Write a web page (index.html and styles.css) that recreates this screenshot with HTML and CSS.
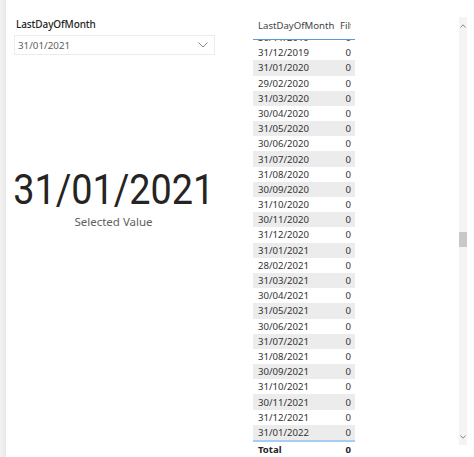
FILE: index.html
```html
<!DOCTYPE html>
<html>
<head>
<meta charset="utf-8">
<link rel="stylesheet" href="styles.css">
</head>
<body>
<div class="edge"></div>
<div class="left">
  <div class="slicer">
    <div class="slicer-label">LastDayOfMonth</div>
    <div class="dropdown">
      <span class="dropdown-value">31/01/2021</span>
      <svg class="chevron" width="10" height="6" viewBox="0 0 10 6"><path d="M0.5 0.5 L5 5 L9.5 0.5" fill="none" stroke="#8a8886" stroke-width="1"/></svg>
    </div>
  </div>
  <div class="card">
    <div class="card-value">31/01/2021</div>
    <div class="card-label">Selected Value</div>
  </div>
</div>
<div class="table-panel">
  <div class="table">
    <div class="thead">
      <div class="c1">LastDayOfMonth</div>
      <div class="c2">FilterFlag</div>
    </div>
    <div class="tbody">
      <div class="row clip"><div class="c1">30/11/2019</div><div class="c2">0</div></div>
      <div class="row"><div class="c1">31/12/2019</div><div class="c2">0</div></div>
      <div class="row"><div class="c1">31/01/2020</div><div class="c2">0</div></div>
      <div class="row"><div class="c1">29/02/2020</div><div class="c2">0</div></div>
      <div class="row"><div class="c1">31/03/2020</div><div class="c2">0</div></div>
      <div class="row"><div class="c1">30/04/2020</div><div class="c2">0</div></div>
      <div class="row"><div class="c1">31/05/2020</div><div class="c2">0</div></div>
      <div class="row"><div class="c1">30/06/2020</div><div class="c2">0</div></div>
      <div class="row"><div class="c1">31/07/2020</div><div class="c2">0</div></div>
      <div class="row"><div class="c1">31/08/2020</div><div class="c2">0</div></div>
      <div class="row"><div class="c1">30/09/2020</div><div class="c2">0</div></div>
      <div class="row"><div class="c1">31/10/2020</div><div class="c2">0</div></div>
      <div class="row"><div class="c1">30/11/2020</div><div class="c2">0</div></div>
      <div class="row"><div class="c1">31/12/2020</div><div class="c2">0</div></div>
      <div class="row"><div class="c1">31/01/2021</div><div class="c2">0</div></div>
      <div class="row"><div class="c1">28/02/2021</div><div class="c2">0</div></div>
      <div class="row"><div class="c1">31/03/2021</div><div class="c2">0</div></div>
      <div class="row"><div class="c1">30/04/2021</div><div class="c2">0</div></div>
      <div class="row"><div class="c1">31/05/2021</div><div class="c2">0</div></div>
      <div class="row"><div class="c1">30/06/2021</div><div class="c2">0</div></div>
      <div class="row"><div class="c1">31/07/2021</div><div class="c2">0</div></div>
      <div class="row"><div class="c1">31/08/2021</div><div class="c2">0</div></div>
      <div class="row"><div class="c1">30/09/2021</div><div class="c2">0</div></div>
      <div class="row"><div class="c1">31/10/2021</div><div class="c2">0</div></div>
      <div class="row"><div class="c1">30/11/2021</div><div class="c2">0</div></div>
      <div class="row"><div class="c1">31/12/2021</div><div class="c2">0</div></div>
      <div class="row"><div class="c1">31/01/2022</div><div class="c2">0</div></div>
    </div>
    <div class="tfoot">
      <div class="c1">Total</div>
      <div class="c2">0</div>
    </div>
  </div>
  <div class="scrollbar">
    <div class="arrow up"><svg width="6" height="4" viewBox="0 0 6 4"><path d="M0.5 3.5 L3 0.8 L5.5 3.5" fill="none" stroke="#888" stroke-width="1"/></svg></div>
    <div class="thumb"></div>
    <div class="spacer"></div>
    <div class="arrow down"><svg width="6" height="4" viewBox="0 0 6 4"><path d="M0.5 0.5 L3 3.2 L5.5 0.5" fill="none" stroke="#888" stroke-width="1"/></svg></div>
  </div>
</div>
</body>
</html>
```
FILE: styles.css
```css
html, body {
  margin: 0;
  padding: 0;
  background: #ffffff;
}
body {
  display: flex;
  width: 474px;
  height: 457px;
  overflow: hidden;
  font-family: "Noto Sans", "Open Sans", sans-serif;
  color: #252423;
}
.edge {
  width: 6px;
  flex: none;
  background: linear-gradient(to right, #f3f3f3, #ebebeb 80%, #e4e4e4);
}
.left {
  width: 215px;
  flex: none;
  display: flex;
  flex-direction: column;
}
.slicer {
  padding: 18px 8px 0 8px;
}
.slicer-label {
  font-size: 10px;
  font-weight: 500;
  letter-spacing: -0.1px;
  line-height: 13px;
  padding-left: 2px;
  color: #252423;
}
.dropdown {
  margin-top: 4px;
  height: 18px;
  border: 1px solid #ececec;
  display: flex;
  align-items: center;
  justify-content: space-between;
  padding: 0 6px 0 3px;
  box-sizing: content-box;
  width: 190px;
}
.dropdown-value {
  font-size: 9.8px;
  color: #605e5c;
}
.chevron {
  display: block;
}
.card {
  margin-top: 111px;
  display: flex;
  flex-direction: column;
  align-items: center;
}
.card-value {
  font-family: "Roboto", "DejaVu Sans", sans-serif;
  font-size: 42px;
  line-height: 48px;
  color: #252423;
  transform: scaleX(0.9);
}
.card-label {
  font-size: 11.5px;
  line-height: 16px;
  color: #605e5c;
}
.table-panel {
  margin-left: 32px;
  flex: 1;
  display: flex;
}
.table {
  width: 102px;
  flex: none;
  display: flex;
  flex-direction: column;
  font-size: 9.6px;
  color: #252423;
}
.thead {
  margin-top: 17px;
  border-bottom: 1px solid #5a9ad8;
  display: flex;
  box-sizing: border-box;
  height: 23px;
  line-height: 14px;
  padding-top: 2px;
  color: #444;
}
.c1 {
  width: 84px;
  flex: none;
  padding-left: 5px;
  box-sizing: border-box;
  white-space: nowrap;
  overflow: hidden;
}
.c2 {
  width: 18px;
  flex: none;
  white-space: nowrap;
  overflow: hidden;
  box-sizing: border-box;
}
.thead .c2 {
  width: 14px;
  padding-left: 3px;
}
.tbody {
  height: 400px;
  overflow: hidden;
  display: flex;
  flex-direction: column;
  justify-content: flex-end;
}
.row {
  height: 15.2px;
  flex: none;
  display: flex;
  align-items: center;
  color: #333;
}
.row:nth-last-child(odd) {
  background: #ececec;
}
.row.clip {
  background: #ffffff;
}
.row .c2, .tfoot .c2 {
  text-align: right;
  padding-right: 4px;
}
.tfoot {
  border-top: 2px solid #a9cdee;
  height: 15px;
  display: flex;
  align-items: center;
  font-weight: 700;
  color: #252423;
}
.scrollbar {
  margin-left: auto;
  margin-right: 7px;
  margin-top: 17px;
  width: 8px;
  height: 428px;
  background: #f4f4f4;
  display: flex;
  flex-direction: column;
  align-items: center;
}
.arrow {
  height: 18px;
  width: 8px;
  display: flex;
  align-items: center;
  justify-content: center;
  flex: none;
}
.arrow.down {
  height: 16px;
}
.thumb {
  margin-top: 197px;
  width: 8px;
  height: 15px;
  background: #c8c8c8;
  flex: none;
}
.spacer {
  flex: 1;
}
```
